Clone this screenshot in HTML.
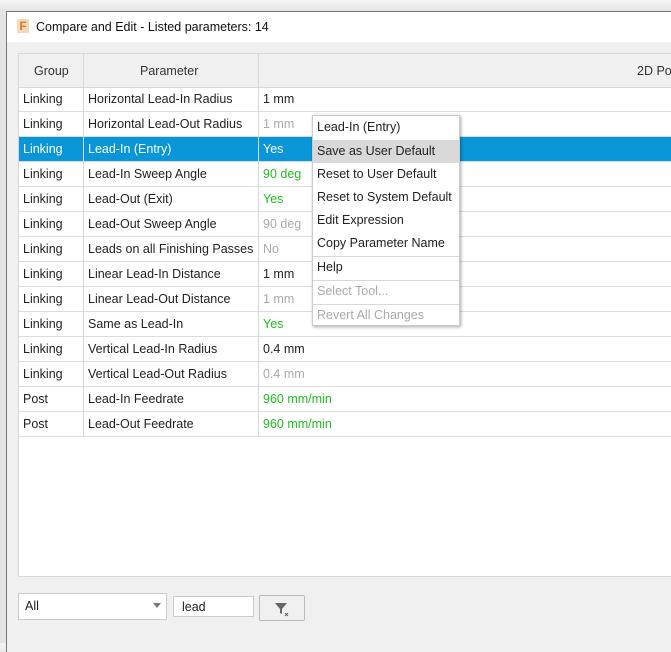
<!DOCTYPE html>
<html><head><style>
body{margin:0;width:671px;height:643px;overflow:hidden;background:linear-gradient(#f6f6f6,#e4e4e4 11px);font-family:"Liberation Sans",sans-serif;font-size:12.5px;color:#222;position:relative}
.win{position:absolute;left:6px;top:11px;width:680px;height:640px;background:#f0f0f0;border-left:1px solid #777;border-top:1px solid #777}
.title{position:absolute;left:0;top:0;right:0;height:30px;background:#fff}
.title span{position:absolute;left:29px;top:8px;font-size:12.5px;color:#111}
.logo{position:absolute;left:10px;top:7px;width:12px;height:14px;background:#f6d9b8;color:#e07a2a;font-weight:bold;font-size:12px;line-height:14px;text-align:center}
.tbl{position:absolute;left:18px;top:53px;width:660px;height:522px;background:#fff;border:1px solid #d8d8d8}
.hdr{position:absolute;left:0;top:0;right:0;height:33px;background:#f0f0f0;border-bottom:1px solid #d8d8d8}
.h{position:absolute;top:10px;font-size:12.5px;color:#333}
.row{position:absolute;left:0;right:0;height:24px;border-bottom:1px solid #dcdcdc}
.row div{position:absolute;top:5px;white-space:nowrap}
.c1{left:4px}.c2{left:69px}.c3{left:244px}
.vl{position:absolute;top:0;width:1px;height:383px;background:#d8d8d8}
.sel{background:#0896d8;color:#fff}
.g{color:#1fbf1f}.d{color:#aaa}
.menu{position:absolute;left:312px;top:115px;width:148px;height:211px;background:#fff;box-shadow:1px 1px 3px rgba(0,0,0,.35);border:1px solid #ccc;box-sizing:border-box}
.mi{position:absolute;left:0;right:0;height:23px;padding-left:4px;line-height:23px;white-space:nowrap}
.sep{position:absolute;left:0;right:0;height:1px;background:#d8d8d8}
</style></head><body>
<div class="win">
 <div class="title"><div class="logo">F</div><span>Compare and Edit - Listed parameters: 14</span></div>
</div>
<div class="tbl">
 <div class="hdr"><div class="h" style="left:15px">Group</div><div class="h" style="left:121px">Parameter</div><div class="h" style="left:618px">2D Poc</div></div>
 <div style="position:absolute;top:33px;left:0;right:0">
 <div class="row" style="top:0"><div class="c1">Linking</div><div class="c2">Horizontal Lead-In Radius</div><div class="c3">1 mm</div></div>
 <div class="row" style="top:25px"><div class="c1">Linking</div><div class="c2">Horizontal Lead-Out Radius</div><div class="c3 d">1 mm</div></div>
 <div class="row sel" style="top:50px"><div class="c1">Linking</div><div class="c2">Lead-In (Entry)</div><div class="c3">Yes</div></div>
 <div class="row" style="top:75px"><div class="c1">Linking</div><div class="c2">Lead-In Sweep Angle</div><div class="c3 g">90 deg</div></div>
 <div class="row" style="top:100px"><div class="c1">Linking</div><div class="c2">Lead-Out (Exit)</div><div class="c3 g">Yes</div></div>
 <div class="row" style="top:125px"><div class="c1">Linking</div><div class="c2">Lead-Out Sweep Angle</div><div class="c3 d">90 deg</div></div>
 <div class="row" style="top:150px"><div class="c1">Linking</div><div class="c2">Leads on all Finishing Passes</div><div class="c3 d">No</div></div>
 <div class="row" style="top:175px"><div class="c1">Linking</div><div class="c2">Linear Lead-In Distance</div><div class="c3">1 mm</div></div>
 <div class="row" style="top:200px"><div class="c1">Linking</div><div class="c2">Linear Lead-Out Distance</div><div class="c3 d">1 mm</div></div>
 <div class="row" style="top:225px"><div class="c1">Linking</div><div class="c2">Same as Lead-In</div><div class="c3 g">Yes</div></div>
 <div class="row" style="top:250px"><div class="c1">Linking</div><div class="c2">Vertical Lead-In Radius</div><div class="c3">0.4 mm</div></div>
 <div class="row" style="top:275px"><div class="c1">Linking</div><div class="c2">Vertical Lead-Out Radius</div><div class="c3 d">0.4 mm</div></div>
 <div class="row" style="top:300px"><div class="c1">Post</div><div class="c2">Lead-In Feedrate</div><div class="c3 g">960 mm/min</div></div>
 <div class="row" style="top:325px"><div class="c1">Post</div><div class="c2">Lead-Out Feedrate</div><div class="c3 g">960 mm/min</div></div>
 </div>
 <div class="vl" style="left:64px"></div><div class="vl" style="left:239px"></div>
</div>
<div class="menu">
 <div class="mi" style="top:0">Lead-In (Entry)</div>
 <div class="mi" style="top:24px;background:#d9d9d9">Save as User Default</div>
 <div class="mi" style="top:47px">Reset to User Default</div>
 <div class="mi" style="top:70px">Reset to System Default</div>
 <div class="mi" style="top:93px">Edit Expression</div>
 <div class="mi" style="top:116px">Copy Parameter Name</div>
 <div class="sep" style="top:140px"></div>
 <div class="mi" style="top:140px">Help</div>
 <div class="sep" style="top:164px"></div>
 <div class="mi d" style="top:164px">Select Tool...</div>
 <div class="sep" style="top:188px"></div>
 <div class="mi d" style="top:188px">Revert All Changes</div>
</div>
<div style="position:absolute;left:18px;top:593px;width:147px;height:25px;background:#fff;border:1px solid #ccc"><span style="position:absolute;left:6px;top:5px">All</span><span style="position:absolute;right:5px;top:9px;border:4px solid transparent;border-top:5px solid #777"></span></div>
<div style="position:absolute;left:173px;top:596px;width:79px;height:19px;background:#fff;border:1px solid #ccc"><span style="position:absolute;left:8px;top:3px">lead</span></div>
<div style="position:absolute;left:259px;top:595px;width:44px;height:24px;background:#f0f0f0;border:1px solid #bbb;border-radius:2px">
<svg width="44" height="24" style="position:absolute;left:0;top:0"><path d="M15 7h12l-5 6v5l-2-1v-4z" fill="#666"/><path d="M25 17l3 3M28 17l-3 3" stroke="#666" stroke-width="1"/></svg></div>
</body></html>
